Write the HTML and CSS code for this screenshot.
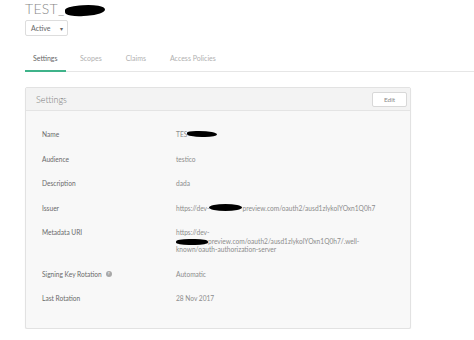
FILE: index.html
```html
<!DOCTYPE html>
<html>
<head>
<meta charset="utf-8">
<link rel="stylesheet" href="styles.css">
</head>
<body>
<div class="page">
  <h1 class="title">TEST_<span class="blot blot-title"></span></h1>
  <div class="status">Active <span class="caret">▾</span></div>
  <nav class="tabs">
    <span class="tab active">Settings</span>
    <span class="tab">Scopes</span>
    <span class="tab">Claims</span>
    <span class="tab">Access Policies</span>
  </nav>
  <section class="panel">
    <header class="panel-head">
      <span class="panel-title">Settings</span>
      <span class="btn">Edit</span>
    </header>
    <div class="panel-body">
      <div class="row"><span class="label">Name</span><span class="value">TES<span class="blot blot-name"></span></span></div>
      <div class="row"><span class="label">Audience</span><span class="value">testico</span></div>
      <div class="row"><span class="label">Description</span><span class="value">dada</span></div>
      <div class="row"><span class="label">Issuer</span><span class="value">https://dev-<span class="blot blot-issuer"></span>preview.com/oauth2/ausd1zlykolYOxn1Q0h7</span></div>
      <div class="row"><span class="label">Metadata URI</span><span class="value multi"><span class="line">https://dev-</span><span class="line"><span class="blot blot-meta"></span>preview.com/oauth2/ausd1zlykolYOxn1Q0h7/.well-</span><span class="line">known/oauth-authorization-server</span></span></div>
      <div class="row"><span class="label">Signing Key Rotation <span class="help">?</span></span><span class="value">Automatic</span></div>
      <div class="row"><span class="label">Last Rotation</span><span class="value">28 Nov 2017</span></div>
    </div>
  </section>
</div>
</body>
</html>
```

FILE: styles.css
```css
* { box-sizing: border-box; }
html, body { margin: 0; padding: 0; background: #fff; }
body { font-family: "Lato", "Open Sans", sans-serif; color: #777; }
.page { padding: 0 63px 0 25px; }
.title {
  margin: 0;
  display: flex;
  align-items: center;
  height: 18px;
  font-size: 14px;
  font-weight: 300;
  color: #888;
  line-height: 18px;
  letter-spacing: 0.3px;
}
.blot { display: inline-block; background: #000; border-radius: 50%; vertical-align: middle; }
.blot-title { width: 40px; height: 11px; border-radius: 40% 60% 50% 50%; transform: rotate(-4deg); margin-top: 2px; }
.status {
  margin-top: 2px;
  display: flex;
  align-items: center;
  gap: 9px;
  height: 16px;
  width: 43px;
  padding: 0 5px;
  border: 1px solid #ddd;
  border-radius: 2px;
  font-size: 7px;
  color: #666;
}
.caret { font-size: 6px; color: #666; }
.tabs {
  display: flex;
  margin-top: 17px;
  margin-right: -63px;
  border-bottom: 1px solid #e6e6e6;
  height: 19px;
  font-size: 7px;
}
.tab {
  color: #b0b0b0;
  padding: 1px 0 0;
  margin-right: 24px;
  line-height: 9px;
}
.tab.active {
  color: #666;
  width: 41px;
  padding-left: 8px;
  margin-right: 14px;
  border-bottom: 2px solid #3fb38a;
  margin-bottom: -1px;
}
.panel {
  margin-top: 15px;
  width: 386px;
  border: 1px solid #e2e2e2;
  border-radius: 2px;
  background: #f8f8f8;
  box-shadow: 0 1px 1px rgba(0,0,0,0.08);
}
.panel-head {
  display: flex;
  align-items: center;
  justify-content: space-between;
  height: 23px;
  padding: 0 3px 0 10px;
  background: #f3f3f3;
  border-bottom: 1px solid #e4e4e4;
}
.panel-title { font-size: 9px; color: #777; font-weight: 300; }
.btn {
  width: 35px;
  height: 15px;
  border: 1px solid #d8d8d8;
  background: #fff;
  border-radius: 2px;
  font-size: 6.5px;
  color: #888;
  display: flex;
  align-items: center;
  justify-content: center;
}
.panel-body {
  display: flex;
  flex-direction: column;
  gap: 16px;
  padding: 19px 16px 25px;
  font-size: 6.6px;
  line-height: 8.5px;
}
.row { display: flex; }
.label { width: 134px; color: #6a6a6a; display: flex; align-items: center; gap: 4px; align-self: flex-start; }
.value { color: #8c8c8c; display: flex; align-items: center; }
.value.multi { flex-direction: column; align-items: flex-start; }
.value .line { display: block; }
.help {
  display: inline-flex;
  align-items: center;
  justify-content: center;
  width: 6px;
  height: 6px;
  border-radius: 50%;
  background: #a8a8a8;
  color: #f8f8f8;
  font-size: 4px;
  font-weight: 700;
  line-height: 1;
}
.blot-name { width: 30px; height: 6px; border-radius: 30% 60% 40% 50%; }
.blot-issuer { width: 33px; height: 7px; }
.blot-meta { width: 32px; height: 6px; border-radius: 40%; }
```
